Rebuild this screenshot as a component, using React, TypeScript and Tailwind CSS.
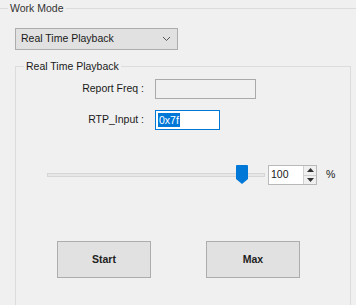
import React from "react";

export default function App() {
  return (
    <div className="w-[356px] h-[305px] overflow-hidden bg-[#f0f0f0] text-[10.5px] text-[#1a1a1a] font-['Liberation_Sans',Arial,sans-serif]">
      <fieldset className="border-t border-[#dcdcdc] mt-[2px] h-[320px]">
        <legend className="ml-[8px] px-[2px] leading-[12px] text-[#333]">Work Mode</legend>

        {/* combo */}
        <div className="mt-[14px] ml-[15px] w-[163px] h-[22px] border border-[#adadad] bg-[#e1e1e1] flex items-center justify-between pl-[5px] pr-[6px]">
          <span>Real Time Playback</span>
          <svg width="9" height="6" viewBox="0 0 9 6" fill="none">
            <path d="M1 1L4.5 4.5L8 1" stroke="#555" strokeWidth="1" />
          </svg>
        </div>

        <fieldset className="ml-[15px] w-[336px] mt-[10px] h-[260px] border border-[#dcdcdc]">
          <legend className="ml-[8px] px-[2px] leading-[12px]">Real Time Playback</legend>

          <div className="flex items-center mt-[7px] h-[20px]">
            <span className="w-[128px] text-right">Report Freq :</span>
            <div className="ml-[11px] w-[101px] h-[20px] border border-[#aaaaaa] bg-[#f0f0f0]" />
          </div>

          <div className="flex items-center mt-[11px] h-[20px]">
            <span className="w-[128px] text-right">RTP_Input :</span>
            <div className="ml-[11px] w-[65px] h-[20px] border border-[#0078d7] bg-white flex items-center pl-[2px]">
              <span className="bg-[#0078d7] text-white leading-[14px] px-[1px]">0x7f</span>
            </div>
          </div>

          <div className="flex items-center mt-[35px] h-[20px]">
            {/* slider */}
            <div className="ml-[31px] w-[218px] h-[20px] relative flex items-center">
              <div className="w-full h-[4px] bg-[#e7e7e7] border border-[#d6d6d6]" />
              <svg className="absolute left-[189px] top-0" width="12" height="20" viewBox="0 0 12 20">
                <path d="M0 1 Q0 0 1 0 H11 Q12 0 12 1 V14 L6 19 L0 14 Z" fill="#0078d7" />
              </svg>
            </div>
            {/* spin */}
            <div className="ml-[3px] w-[49px] h-[20px] border border-[#b9b9b9] bg-white flex items-center">
              <span className="pl-[2px] flex-1">100</span>
              <div className="w-[13px] h-full flex flex-col border-l border-[#d0d0d0] bg-[#f0f0f0]">
                <div className="flex-1 flex items-center justify-center border-b border-[#d0d0d0]">
                  <svg width="7" height="4" viewBox="0 0 7 4"><path d="M0 4L3.5 0L7 4Z" fill="#333" /></svg>
                </div>
                <div className="flex-1 flex items-center justify-center">
                  <svg width="7" height="4" viewBox="0 0 7 4"><path d="M0 0L3.5 4L7 0Z" fill="#333" /></svg>
                </div>
              </div>
            </div>
            <span className="ml-[9px]">%</span>
          </div>

          <div className="flex mt-[56px]">
            <button className="ml-[41px] w-[94px] h-[37px] border border-[#adadad] bg-[#e1e1e1] font-bold text-[#222]">Start</button>
            <button className="ml-[55px] w-[94px] h-[37px] border border-[#adadad] bg-[#e1e1e1] font-bold text-[#222]">Max</button>
          </div>
        </fieldset>
      </fieldset>
    </div>
  );
}
